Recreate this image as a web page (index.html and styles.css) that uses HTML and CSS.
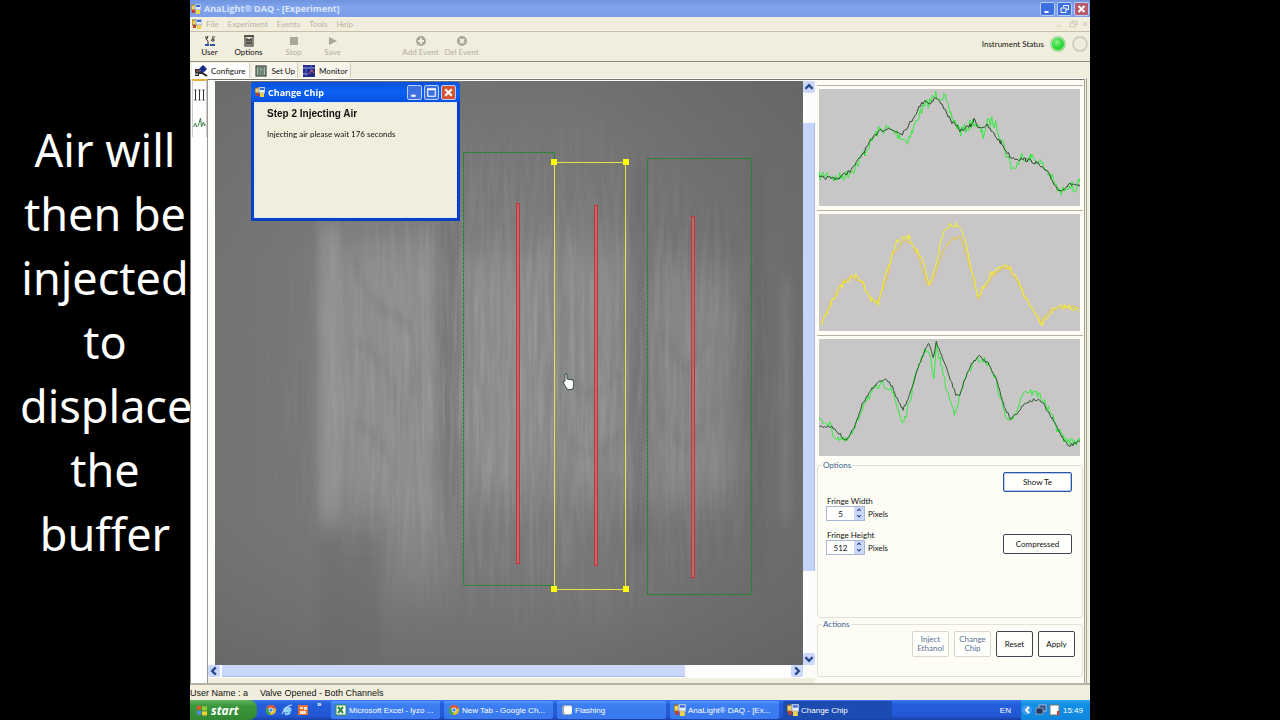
FILE: index.html
```html
<!DOCTYPE html>
<html lang="en">
<head>
  <meta charset="UTF-8">
  <meta name="viewport" content="width=device-width, initial-scale=1.0">
  <title>AnaLight DAQ - Experiment</title>
  <link rel="stylesheet" href="styles.css">
</head>
<body>
  <svg class="defs" width="0" height="0" aria-hidden="true">
    <symbol id="form" viewBox="0 0 10 10">
      <rect x="0" y="1" width="5" height="5" fill="#f4d35e" stroke="#8a6d1c"/>
      <rect x="4" y="0" width="6" height="6" fill="#e9eefb" stroke="#8fa3d0"/>
      <rect x="5" y="1" width="4" height="2" fill="#3a66d8"/>
      <rect x="1" y="6" width="3" height="3" fill="#c43c2a"/>
      <rect x="5" y="6" width="4" height="4" fill="#f0d24c"/>
    </symbol>
    <symbol id="chrome" viewBox="0 0 12 12">
      <circle cx="6" cy="6" r="5" fill="#e8bf2c"/>
      <path d="M6 6 1.6 3.5A5 5 0 0 1 10.6 4Z" fill="#dd4b39"/>
      <path d="M6 6 1.6 3.5A5 5 0 0 0 5 11Z" fill="#3fa348"/>
      <circle cx="6" cy="6" r="2.4" fill="#fff"/>
      <circle cx="6" cy="6" r="1.8" fill="#4a86e8"/>
    </symbol>
    <symbol id="arrow" viewBox="0 0 10 10">
      <path d="M2 6.5 5 3.5 8 6.5" fill="none" stroke="#2f4a8c" stroke-width="2"/>
    </symbol>
  </svg>

  <div class="screen">
    <p class="caption">Air will then be injected to displace the buffer</p>

    <div class="desktop">
      <header class="titlebar">
        <svg class="icon"><use href="#form"/></svg>
        <h1>AnaLight® DAQ - [Experiment]</h1>
        <div class="winbtns">
          <button aria-label="Minimize"><svg viewBox="0 0 12 12"><path d="M3 9h4" stroke="#fff" stroke-width="2"/></svg></button>
          <button aria-label="Restore"><svg viewBox="0 0 12 12"><path d="M5 4V2.500h5v4H8M2.500 5h5v4.500h-5z" fill="none" stroke="#fff"/></svg></button>
          <button class="close" aria-label="Close"><svg viewBox="0 0 12 12"><path d="m3 3 6 6M9 3 3 9" stroke="#fff" stroke-width="2"/></svg></button>
        </div>
      </header>

      <nav class="menubar">
        <svg class="icon"><use href="#form"/></svg>
        <a>File</a><a>Experiment</a><a>Events</a><a>Tools</a><a>Help</a>
        <svg class="mdi" viewBox="0 0 34 10"><path d="M3 7h4M18 4V2h5v4h-2M16 4h5v4h-5zM29 3l4 4M33 3l-4 4" fill="none" stroke="#cdc9b8"/></svg>
      </nav>

      <div class="toolbar">
        <div class="tools">
          <button>
            <svg viewBox="0 0 12 12"><path d="M2 1v3l2 2M4 1 3 4M4 6v3M7 6l2-3M8 2h3M9 3v4M9 5h2" fill="none" stroke="#333"/><path d="M1 10h4M6 10h5" stroke="#2f50a8" stroke-width="2"/></svg>
            User
          </button>
          <button>
            <svg viewBox="0 0 12 12"><rect x="2" y="1" width="8" height="10" fill="#dfe3cf" stroke="#222"/><path d="M1 1h10M4 3v7M6 4v6M8 3v7M3 5h6M3 8h6" stroke="#222"/></svg>
            Options
          </button>
        </div>
        <div class="tools">
          <button disabled><svg viewBox="0 0 12 12"><path d="M2 2h8v8H2z" fill="#a9a69a"/></svg>Stop</button>
          <button disabled><svg viewBox="0 0 12 12"><path d="M2 2v8l8-4z" fill="#a9a69a"/></svg>Save</button>
        </div>
        <div class="tools events">
          <button disabled><svg viewBox="0 0 12 12"><circle cx="6" cy="6" r="5" fill="#a9a69a"/><path d="M6 3v6M3 6h6" stroke="#f1eedd" stroke-width="2"/></svg>Add Event</button>
          <button disabled><svg viewBox="0 0 12 12"><circle cx="6" cy="6" r="5" fill="#a9a69a"/><path d="m4 4 4 4M8 4 4 8" stroke="#f1eedd" stroke-width="2"/></svg>Del Event</button>
        </div>
        <div class="status">
          Instrument Status
          <span class="lamp on"></span>
          <span class="lamp"></span>
        </div>
      </div>

      <div class="tabs">
        <button class="active">
          <svg viewBox="0 0 14 12"><path d="M1 4h5v2h3v3H5v2H1z" fill="#2c2c35"/><circle cx="9" cy="4" r="3" fill="#1d34a5"/><path d="M9 0v8M5 4h8" stroke="#16256e"/><path d="M2 6h4" stroke="#d46a5a"/><path d="M1 9h3" stroke="#fff"/><path d="M8 8l5 3" stroke="#222" stroke-width="2"/></svg>
          Configure
        </button>
        <button>
          <svg viewBox="0 0 12 12"><rect x="1" y="1" width="10" height="10" fill="#a3b8a6" stroke="#222"/><path d="M3 3h6M4 4v6M6 5v5M8 4v6" stroke="#3b5a44"/></svg>
          Set Up
        </button>
        <button>
          <svg viewBox="0 0 14 12"><rect x="1" y="0" width="12" height="12" fill="#232c85"/><path d="M1 3h12M1 9h5" stroke="#9dacef"/><path d="M4 1v10M9 0v7" stroke="#5167d4"/><path d="m7 9 3-4 2 3" fill="none" stroke="#e4575a"/></svg>
          Monitor
        </button>
      </div>

      <main class="work">
        <aside class="side">
          <button class="active" aria-label="Fringes"><svg viewBox="0 0 12 16"><path d="M2 3v10M6 3v10M10 3v10M1 3h2M5 3h2M9 3h2M1 13h2M5 13h2M9 13h2" stroke="#333"/></svg></button>
          <button aria-label="Traces"><svg viewBox="0 0 12 16"><path d="M0 12l2-4 1 4 2-2 2-7 1 9 2-5 1 4 1-2" fill="none" stroke="#3f7f48"/></svg></button>
        </aside>

        <section class="viewer">
          <div class="camera">
            <svg viewBox="0 0 588 584" preserveAspectRatio="none">
              <defs>
                <linearGradient id="base" x1="0" y1="0" x2="1" y2="0">
                  <stop offset="0" stop-color="#747373"/>
                  <stop offset="0.300" stop-color="#7d7c7c"/>
                  <stop offset="0.600" stop-color="#7c7b7b"/>
                  <stop offset="1" stop-color="#6d6c6c"/>
                </linearGradient>
                <linearGradient id="dim" x1="0" y1="0" x2="0" y2="1">
                  <stop offset="0" stop-color="#555" stop-opacity="0.250"/>
                  <stop offset="0.300" stop-color="#666" stop-opacity="0"/>
                  <stop offset="0.750" stop-color="#666" stop-opacity="0"/>
                  <stop offset="1" stop-color="#555" stop-opacity="0.350"/>
                </linearGradient>
                <filter id="soft" x="-30%" y="-30%" width="160%" height="160%"><feGaussianBlur stdDeviation="12 22"/></filter>
                <filter id="edge" x="-30%" y="-30%" width="160%" height="160%"><feGaussianBlur stdDeviation="3 10"/></filter>
                <filter id="fringe" x="-30%" y="-30%" width="160%" height="160%"><feGaussianBlur stdDeviation="3 4"/></filter>
                <filter id="streaks" x="0" y="0" width="100%" height="100%">
                  <feTurbulence type="fractalNoise" baseFrequency="0.200 0.014" numOctaves="3" seed="4"/>
                  <feColorMatrix values="0 0 0 0 0.720  0 0 0 0 0.720  0 0 0 0 0.720  1.600 0 0 0 -0.600"/>
                </filter>
                <radialGradient id="lit"><stop offset="0" stop-color="#fff"/><stop offset="0.600" stop-color="#888"/><stop offset="1" stop-color="#000"/></radialGradient>
                <mask id="spot"><ellipse cx="320" cy="300" rx="300" ry="290" fill="url(#lit)"/></mask>
              </defs>
              <rect width="588" height="584" fill="url(#base)"/>
              <g filter="url(#soft)" fill="#a09f9f">
                <rect x="112" y="160" width="105" height="270" opacity="0.500"/>
                <rect x="245" y="170" width="90" height="240" opacity="0.450"/>
                <rect x="345" y="160" width="70" height="250" opacity="0.400"/>
                <rect x="435" y="190" width="85" height="230" opacity="0.400"/>
                <rect x="175" y="410" width="50" height="110" opacity="0.300"/>
              </g>
              <g filter="url(#edge)">
                <rect x="103" y="140" width="22" height="300" fill="#aaa" opacity="0.350"/>
                <rect x="207" y="150" width="10" height="290" fill="#aaa" opacity="0.250"/>
                <rect x="226" y="130" width="18" height="300" fill="#666" opacity="0.200"/>
                <rect x="416" y="90" width="16" height="380" fill="#606060" opacity="0.300"/>
                <rect x="536" y="90" width="14" height="400" fill="#606060" opacity="0.250"/>
                <rect x="566" y="200" width="10" height="240" fill="#999" opacity="0.250"/>
                <path d="M105 455h60v125h-60z" fill="#666" opacity="0.200"/>
              </g>
              <g filter="url(#fringe)" fill="none" stroke="#666" stroke-width="6" opacity="0.250">
                <path d="M140 175q10 50 40 60t20 80M140 260q40 20 50 90M140 340q30 15 40 60"/>
                <path d="M355 300q25 30 50-10M355 360q25 30 50-10M445 250l25 40 30-40M445 330l25 40 30-40"/>
              </g>
              <rect width="588" height="584" filter="url(#streaks)" mask="url(#spot)" opacity="0.300"/>
              <rect width="588" height="584" fill="url(#dim)"/>

              <!-- measurement regions -->
              <g fill="none" stroke="#148a24" stroke-dasharray="3 1">
                <rect x="248.500" y="71.500" width="91" height="433"/>
                <rect x="432.500" y="77.500" width="104" height="436"/>
              </g>
              <rect x="339.500" y="81.500" width="71" height="427" fill="none" stroke="#e6e34a"/>
              <g fill="#ffff00">
                <rect x="336" y="78" width="6" height="6"/><rect x="408" y="78" width="6" height="6"/>
                <rect x="336" y="505" width="6" height="6"/><rect x="408" y="505" width="6" height="6"/>
              </g>
              <g fill="#b07070" stroke="#c8303a">
                <rect x="301.500" y="122.500" width="3" height="360"/>
                <rect x="379.500" y="124.500" width="3" height="360"/>
                <rect x="476.500" y="135.500" width="3" height="361"/>
              </g>
              <path d="M350 293h2v5l6 1 1 3-1 6-5 1-3-4-2-4 2-1z" fill="#fff" stroke="#2c4a3a"/>
            </svg>

            <div class="dialog" role="dialog" aria-label="Change Chip">
              <div class="dialog-title">
                <svg class="icon"><use href="#form"/></svg>
                <h2>Change Chip</h2>
                <div class="winbtns">
                  <button aria-label="Minimize"><svg viewBox="0 0 12 12"><path d="M3 9h4" stroke="#fff" stroke-width="2"/></svg></button>
                  <button aria-label="Maximize"><svg viewBox="0 0 12 12"><path d="M2.500 2.500h7v7h-7zM2 3.500h8" fill="none" stroke="#fff"/></svg></button>
                  <button class="close" aria-label="Close"><svg viewBox="0 0 12 12"><path d="m3 3 6 6M9 3 3 9" stroke="#fff" stroke-width="2"/></svg></button>
                </div>
              </div>
              <div class="dialog-body">
                <h3>Step 2 Injecting Air</h3>
                <p>Injecting air please wait 176 seconds</p>
              </div>
            </div>
          </div>
          <div class="vscroll">
            <svg><use href="#arrow"/></svg>
            <div class="track"><div class="thumb"></div></div>
            <svg class="down"><use href="#arrow"/></svg>
          </div>
          <div class="hscroll">
            <svg class="left"><use href="#arrow"/></svg>
            <div class="track"><div class="thumb"></div></div>
            <svg class="right"><use href="#arrow"/></svg>
          </div>
        </section>

        <section class="panel">
          <div class="chart"><svg id="chart1" viewBox="0 0 783 351" preserveAspectRatio="none"></svg></div>
          <div class="chart"><svg id="chart2" viewBox="0 0 783 351" preserveAspectRatio="none"></svg></div>
          <div class="chart"><svg id="chart3" viewBox="0 0 783 351" preserveAspectRatio="none"></svg></div>

          <fieldset class="options">
            <legend>Options</legend>
            <div class="fields">
              <label for="fringeWidth">Fringe Width</label>
              <div class="field">
                <div class="spin"><input type="text" id="fringeWidth" value="5"><span><svg><use href="#arrow"/></svg><svg class="down"><use href="#arrow"/></svg></span></div>
                Pixels
              </div>
              <label for="fringeHeight">Fringe Height</label>
              <div class="field">
                <div class="spin"><input type="text" id="fringeHeight" value="512"><span><svg><use href="#arrow"/></svg><svg class="down"><use href="#arrow"/></svg></span></div>
                Pixels
              </div>
            </div>
            <div class="modes">
              <button class="btn focus">Show Te</button>
              <button class="btn">Compressed</button>
            </div>
          </fieldset>

          <fieldset class="actions">
            <legend>Actions</legend>
            <button class="btn" disabled>Inject Ethanol</button>
            <button class="btn" disabled>Change Chip</button>
            <button class="btn">Reset</button>
            <button class="btn">Apply</button>
          </fieldset>
        </section>
      </main>

      <footer class="statusbar">
        <span>User Name : a</span>
        <span>Valve Opened - Both Channels</span>
      </footer>

      <div class="taskbar">
        <button class="start">
          <svg viewBox="0 0 12 12"><path d="M1 2q2-1 4 0v4q-2-1-4 0z" fill="#e8552c"/><path d="M6 2q2 1 5 0v4q-3 1-5 0z" fill="#8fd03c"/><path d="M1 7q2-1 4 0v4q-2-1-4 0z" fill="#4d8cf0"/><path d="M6 7q2 1 5 0v4q-3 1-5 0z" fill="#f8cf30"/></svg>
          start
        </button>
        <div class="quick">
          <svg><use href="#chrome"/></svg>
          <svg viewBox="0 0 12 12"><path d="M9.500 7.500H3.500A3 3 0 1 1 9.500 6H4M9 8.500a3.500 3.500 0 0 1-5 1" fill="none" stroke="#8cd4fa" stroke-width="2"/><path d="M1 10Q5 1 11 1" fill="none" stroke="#d6e8ff"/></svg>
          <svg viewBox="0 0 12 12"><rect x="1" y="1" width="10" height="10" fill="#e2703a"/><path d="M3 3h3v2H3zM7 3h3v3H7zM3 7h6v3H3z" fill="#fbe3c8"/></svg>
          <b>»</b>
        </div>
        <div class="tasks">
          <button><svg viewBox="0 0 12 12"><rect x="1" y="1" width="10" height="10" fill="#fff" stroke="#2f8a3e"/><path d="m3 3 5 6M8 3 3 9" stroke="#2f8a3e" stroke-width="2"/></svg>Microsoft Excel - lyzo ...</button>
          <button><svg><use href="#chrome"/></svg>New Tab - Google Ch...</button>
          <button><svg viewBox="0 0 12 12"><rect x="1" y="1" width="10" height="10" rx="2" fill="#9aa7b5"/><rect x="3" y="2" width="8" height="8" rx="2" fill="#fff"/></svg>Flashing</button>
          <button><svg><use href="#form"/></svg>AnaLight® DAQ - [Ex...</button>
          <button class="active"><svg><use href="#form"/></svg>Change Chip</button>
        </div>
        <span class="lang">EN</span>
        <div class="tray">
          <svg viewBox="0 0 12 12"><circle cx="6" cy="6" r="5" fill="#3f9cf2"/><path d="M8 3 5 6l3 3" fill="none" stroke="#fff" stroke-width="2"/></svg>
          <svg viewBox="0 0 12 12"><rect x="4" y="1" width="7" height="6" fill="#2b4a86" stroke="#a9b7cc"/><rect x="1" y="4" width="7" height="6" fill="#20355e" stroke="#8b9cb8"/></svg>
          <svg viewBox="0 0 12 12"><rect x="1" y="1" width="9" height="10" fill="#fff" stroke="#777"/><path d="M9 7v4" stroke="#d04030" stroke-width="2"/></svg>
          <span>15:49</span>
        </div>
      </div>
    </div>
  </div>

  <script>
    // every trace is a list of x,y anchors plus the noise between them
    const charts = {
      chart1: [
        { color: '#2fee3c', noise: 16, points: [[0,262],[25,255],[50,268],[80,258],[105,240],[130,200],[155,160],[178,125],[205,118],[240,138],[262,155],[280,130],[300,75],[320,50],[340,30],[350,18],[375,20],[388,60],[405,95],[425,128],[445,115],[465,98],[482,120],[492,140],[502,108],[518,95],[535,115],[550,155],[565,205],[583,240],[595,225],[610,200],[635,205],[655,212],[680,240],[700,270],[715,300],[728,315],[740,290],[755,285],[765,305],[782,280]] },
        { color: '#2c4a2c', noise: 6, points: [[0,267],[60,267],[100,240],[140,180],[180,122],[210,120],[250,132],[275,100],[300,55],[318,32],[330,45],[350,25],[375,55],[395,95],[425,125],[455,110],[465,92],[480,115],[505,110],[520,130],[545,160],[575,205],[620,212],[650,220],[685,250],[700,275],[720,306],[745,290],[760,285],[782,292]] }
      ],
      chart2: [
        { color: '#f0c62e', noise: 6, points: [[8,330],[40,260],[70,205],[105,188],[130,208],[155,250],[175,268],[200,200],[225,115],[255,80],[275,85],[300,130],[325,210],[335,215],[360,145],[380,100],[400,75],[425,72],[440,110],[460,180],[478,250],[500,215],[525,180],[550,162],[570,160],[600,210],[640,285],[665,325],[690,295],[730,275],[782,285]] },
        { color: '#f4f02c', noise: 9, points: [[8,332],[45,250],[75,205],[110,185],[130,200],[155,255],[178,265],[205,165],[235,80],[270,70],[295,110],[315,155],[330,218],[345,175],[362,100],[375,50],[392,32],[420,30],[435,65],[450,130],[465,200],[478,252],[495,215],[515,180],[540,165],[565,155],[590,190],[625,260],[650,305],[667,332],[700,290],[730,278],[755,280],[782,292]] }
      ],
      chart3: [
        { color: '#2fee3c', noise: 12, points: [[0,245],[30,250],[45,290],[80,308],[100,285],[115,250],[135,190],[160,160],[190,135],[215,145],[235,205],[250,252],[265,220],[285,130],[305,60],[325,25],[335,60],[344,125],[352,20],[365,70],[380,140],[395,190],[406,218],[420,180],[440,115],[460,80],[480,60],[500,65],[525,105],[540,160],[555,215],[570,255],[590,215],[615,155],[640,160],[665,170],[690,215],[715,270],[740,305],[782,308]] },
        { color: '#2c5a30', noise: 5, points: [[0,262],[35,262],[60,285],[82,303],[105,265],[130,195],[155,155],[175,135],[195,120],[220,140],[235,180],[252,210],[270,175],[300,75],[320,30],[330,15],[343,55],[352,10],[370,55],[390,110],[410,165],[422,170],[445,100],[465,65],[480,52],[510,75],[530,115],[555,200],[575,240],[600,215],[620,190],[650,182],[670,190],[700,240],[730,295],[750,320],[782,307]] }
      ]
    };

    let seed = 7;
    function random() {
      seed = (seed * 16807) % 2147483647;
      return seed / 2147483647;
    }

    function drawTrace(svg, trace) {
      const path = [];
      for (let i = 0; i < trace.points.length - 1; i++) {
        const [x1, y1] = trace.points[i];
        const [x2, y2] = trace.points[i + 1];
        for (let x = x1; x < x2; x += 4) {
          const y = y1 + (y2 - y1) * (x - x1) / (x2 - x1);
          path.push(x + ',' + Math.round(y + (random() - 0.5) * 2 * trace.noise));
        }
      }
      path.push(trace.points[trace.points.length - 1].join(','));
      const line = document.createElementNS('http://www.w3.org/2000/svg', 'polyline');
      line.setAttribute('points', path.join(' '));
      line.setAttribute('stroke', trace.color);
      svg.appendChild(line);
    }

    for (const id in charts) {
      charts[id].forEach(trace => drawTrace(document.getElementById(id), trace));
    }
  </script>
</body>
</html>
```
FILE: styles.css
```css
* {
  box-sizing: border-box;
}

body {
  margin: 0;
  background: #000;
  color: #111;
  font-family: Lato, Arial, sans-serif;
  font-size: 8px;
}

h1, h2, h3, p {
  margin: 0;
}

button, input {
  font: inherit;
  color: inherit;
  padding: 0;
  margin: 0;
}

svg {
  display: block;
  flex: none;
}

.defs {
  position: absolute;
}

.icon {
  width: 10px;
  height: 10px;
}

.screen {
  display: flex;
  min-height: 100vh;
}

.caption {
  width: 190px;
  padding: 118px 0 0 20px;
  color: #fff;
  font-family: "Noto Sans", sans-serif;
  font-size: 45px;
  line-height: 64px;
  text-align: center;
}

.desktop {
  flex: 1;
  min-width: 0;
  margin-right: 190px;
  display: flex;
  flex-direction: column;
  background: #f1eedd;
}

/* title bar and menu */
.titlebar {
  display: flex;
  align-items: center;
  gap: 3px;
  height: 17px;
  padding: 0 1px;
  background: linear-gradient(#6f93dc, #7fa3ee 40%, #7b9ee8);
}

.titlebar h1 {
  flex: 1;
  color: #dbe6fb;
  font: bold 9px "Open Sans", sans-serif;
}

.winbtns {
  display: flex;
  gap: 2px;
}

.winbtns button {
  width: 15px;
  height: 15px;
  border: 1px solid #b9cdf7;
  border-radius: 2px;
  background: #3c6fe0;
}

.winbtns .close {
  background: #d9532f;
}

.titlebar .winbtns .close {
  background: #b5596b;
}

.titlebar .winbtns button {
  height: 14px;
}

.winbtns svg {
  width: 100%;
  height: 100%;
}

.menubar {
  display: flex;
  align-items: center;
  gap: 9px;
  height: 15px;
  padding: 0 2px;
  border-bottom: 1px solid #c9bfa8;
  color: #b8b3a3;
}

.menubar .icon {
  margin-right: -5px;
}

.mdi {
  width: 34px;
  height: 10px;
  margin-left: auto;
}

/* toolbar */
.toolbar {
  display: flex;
  height: 30px;
  border-bottom: 1px solid #8e8c80;
}

.tools {
  display: flex;
  margin-right: 6px;
}

.tools button {
  display: flex;
  flex-direction: column;
  align-items: center;
  width: 39px;
  padding-top: 3px;
  border: 0;
  background: none;
  white-space: nowrap;
}

.tools button:disabled {
  color: #b3afa0;
}

.tools svg {
  width: 12px;
  height: 12px;
}

.events {
  margin-left: 42px;
}

.events button {
  width: 41px;
}

.status {
  display: flex;
  align-items: center;
  gap: 6px;
  margin-left: auto;
  padding: 0 2px 6px 0;
}

.lamp {
  width: 16px;
  height: 16px;
  border: 2px solid #d3cfbf;
  border-radius: 50%;
  background: #efecdf;
}

.lamp.on {
  border-color: #a5dca0;
  background: radial-gradient(circle at 40% 35%, #8df58c, #2bd937 50%);
}

.tabs {
  display: flex;
  gap: 2px;
  height: 16px;
  padding: 1px 2px 0;
}

.tabs button {
  display: flex;
  align-items: center;
  gap: 3px;
  padding: 0 2px;
  border: 1px solid #d2cfbf;
  border-width: 0 1px 0 0;
  background: #f8f6ec;
}

.tabs .active {
  padding-right: 4px;
  background: #fff;
}

.tabs svg {
  width: 14px;
  height: 12px;
}

/* work area */
.work {
  flex: 1;
  display: flex;
  margin-right: 3px;
  border-top: 1px solid #fff;
  border-right: 3px double #a5a396;
}

.side {
  width: 18px;
  padding: 0 1px;
  border-left: 1px solid #888;
  background: #fff;
  border-right: 1px solid #9c9a90;
}

.side button {
  display: block;
  width: 15px;
  height: 29px;
  border: 1px solid #ccc;
  border-width: 0 1px;
  background: #fff;
}

.side .active {
  border-top: 2px solid #e8b040;
}

.side svg {
  width: 13px;
  height: 16px;
}

.viewer {
  flex: 1;
  min-width: 0;
  display: grid;
  grid-template: 1fr 13px / 1fr 12px;
  margin-bottom: 5px;
  padding-top: 1px;
  border-top: 1px solid #77756c;
  background: #fdfdf8;
}

.camera {
  position: relative;
  margin-left: 7px;
  background: #777;
}

.camera > svg {
  position: absolute;
  width: 100%;
  height: 100%;
}

.vscroll, .hscroll {
  display: flex;
  background: #fdfdfd;
}

.vscroll {
  flex-direction: column;
}

.vscroll > svg, .hscroll > svg {
  width: 12px;
  height: 12px;
  border-radius: 2px;
  background: #cbd8fa;
}

.track {
  flex: 1;
}

.vscroll .thumb {
  height: 80%;
  margin-top: 30px;
  background: #c6d3fa;
  border-right: 1px solid #a9bcf0;
}

.hscroll .thumb {
  width: 81%;
  height: 12px;
  margin-left: 2px;
  background: #cbd6fb;
  border-bottom: 1px solid #a9bcf0;
}

.down {
  transform: rotate(180deg);
}

.left {
  transform: rotate(-90deg);
}

.right {
  transform: rotate(90deg);
}

/* dialog */
.dialog {
  position: absolute;
  left: 36px;
  top: 1px;
  width: 209px;
  height: 139px;
  padding: 0 3px 3px;
  border-radius: 4px 4px 0 0;
  background: #0b3fc4;
}

.dialog-title {
  display: flex;
  align-items: center;
  gap: 3px;
  height: 20px;
  margin: 0 -3px;
  padding: 0 4px;
  border-radius: 4px 4px 0 0;
  background: linear-gradient(#0a50dc, #0a62f4 50%, #0450e0);
}

.dialog-title h2 {
  flex: 1;
  color: #fff;
  font: bold 9px "Open Sans", sans-serif;
}

.dialog-body {
  height: 116px;
  padding: 5px 12px;
  border: 1px solid #dde8fb;
  background: #f1eedd;
}

.dialog-body h3 {
  margin-bottom: 9px;
  color: #111;
  font-family: "Liberation Sans", Arial, sans-serif;
  font-size: 10px;
  line-height: 12px;
}

/* right panel */
.panel {
  width: 269px;
  padding: 5px 1px 6px 2px;
  display: flex;
  flex-direction: column;
  border-top: 1px solid #77756c;
  background: #fdfdf6;
}

.chart {
  height: 125px;
  padding: 3px 3px 4px 2px;
  border-top: 1px solid #b5b3a8;
}

.chart svg {
  width: 100%;
  height: 117px;
  background: #c8c6c7;
  fill: none;
  stroke-width: 3;
}

fieldset {
  min-width: 0;
  margin: 0;
  border: 1px solid #e3e2d8;
  border-radius: 3px;
}

legend {
  margin-left: 4px;
  padding: 0 1px;
  color: #3c5f92;
}

.options {
  flex: 1;
  display: flex;
  justify-content: space-between;
  padding: 0 10px 0 0;
}

.fields {
  padding: 26px 0 0 8px;
}

.fields label {
  display: block;
  margin-left: 1px;
  line-height: 10px;
}

.field {
  display: flex;
  align-items: center;
  gap: 3px;
  height: 15px;
  margin-bottom: 9px;
}

.spin {
  display: flex;
  width: 39px;
  height: 15px;
  border: 1px solid #a9b7d4;
  background: #fff;
}

.spin input {
  width: 27px;
  border: 0;
  background: none;
  text-align: center;
}

.spin span {
  width: 10px;
  background: #cbd8fa;
}

.spin svg {
  width: 10px;
  height: 6px;
}

.modes {
  display: flex;
  flex-direction: column;
  gap: 42px;
  padding-top: 2px;
}

.btn {
  border: 1px solid #3f4650;
  border-radius: 2px;
  background: #fffffb;
}

.btn:disabled {
  border-color: #d9d7ca;
  color: #5a7396;
}

.modes .btn {
  width: 69px;
  height: 20px;
}

.btn.focus {
  border-color: #2d55a0;
  box-shadow: inset 0 0 0 1px #b4c9f3;
}

.actions {
  display: flex;
  justify-content: flex-end;
  gap: 5px;
  height: 58px;
  margin-top: 1px;
  padding: 2px 7px 2px 0;
}

.actions .btn {
  width: 37px;
  height: 26px;
  line-height: 9px;
}

/* bottom bars */
.statusbar {
  display: flex;
  align-items: center;
  gap: 12px;
  height: 17px;
  border-top: 2px solid #b5b3a5;
  font-family: "Liberation Sans", Arial, sans-serif;
  font-size: 9px;
}

.taskbar {
  display: flex;
  height: 20px;
  background: linear-gradient(#3a78ee, #245edb 20%, #2258d4 80%, #1941a5);
  color: #fff;
  font-family: "Liberation Sans", Arial, sans-serif;
}

.taskbar svg {
  width: 12px;
  height: 12px;
}

.start {
  display: flex;
  align-items: center;
  gap: 3px;
  width: 67px;
  padding-left: 6px;
  border: 0;
  border-radius: 0 8px 8px 0;
  background: linear-gradient(#5db55a, #3a963a 30%, #328832);
  color: #fff;
  font: italic bold 12px "Open Sans", sans-serif;
}

.quick {
  display: flex;
  align-items: center;
  gap: 4px;
  width: 74px;
  padding-left: 8px;
}

.quick b {
  align-self: flex-start;
  margin-left: 4px;
}

.tasks {
  flex: 1;
  min-width: 0;
  display: flex;
  gap: 4px;
}

.tasks button {
  display: flex;
  align-items: center;
  gap: 2px;
  width: 109px;
  height: 18px;
  margin-top: 1px;
  padding-left: 4px;
  border: 0;
  border-radius: 2px;
  background: linear-gradient(#5a96fa, #3c7ff2 20%, #3a78ee);
  color: #fff;
  white-space: nowrap;
}

.tasks .active {
  background: #1c4bb2;
}

.lang {
  align-self: center;
  margin-right: 10px;
}

.tray {
  display: flex;
  align-items: center;
  gap: 2px;
  padding: 0 7px 0 0;
  background: linear-gradient(#2ea6f2, #1290e8 20%, #0f86dc);
}
```
